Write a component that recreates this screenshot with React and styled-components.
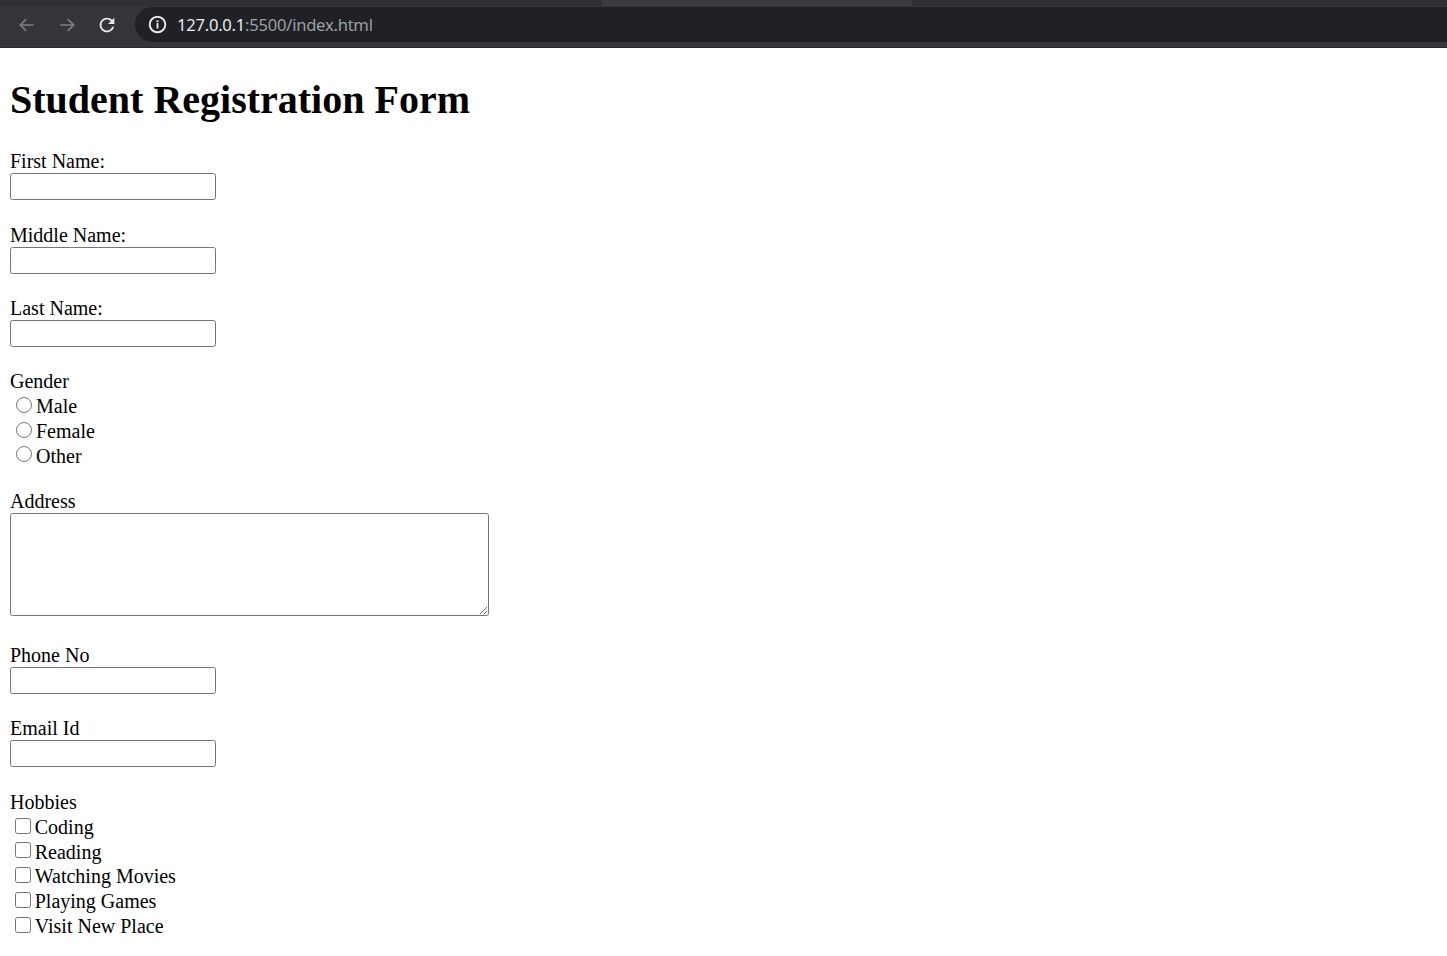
import React from "react";
import styled, { createGlobalStyle } from "styled-components";

const Global = createGlobalStyle`
  html, body { margin: 0; padding: 0; background: #fff; }
  body { font-family: "Liberation Serif", "Times New Roman", serif; color: #000; }
`;

const Chrome = styled.div`
  display: flex;
  flex-direction: column;
  height: 48px;
  background: #35363a;
  border-bottom: 1px solid #2a2b2e;
  box-sizing: border-box;
`;

const TabStrip = styled.div`
  height: 6px;
  background: #2b2c30;
  display: flex;
`;

const TabSeg = styled.div`
  width: ${(p) => p.$w}px;
  background: ${(p) => (p.$light ? "#3c3d41" : "#2f3034")};
`;

const Toolbar = styled.div`
  flex: 1;
  display: flex;
  align-items: center;
  padding: 0 0 4px 0;
`;

const NavBtn = styled.div`
  width: 40px;
  height: 36px;
  display: flex;
  align-items: center;
  justify-content: center;
  margin-left: ${(p) => p.$ml || 0}px;
  color: ${(p) => (p.$dim ? "#7c7d80" : "#e8eaed")};
`;

const Omnibox = styled.div`
  flex: 1;
  height: 35px;
  margin-left: 8px;
  background: #202124;
  border-radius: 18px 0 0 18px;
  display: flex;
  align-items: center;
  padding-left: 13px;
  font-family: "Noto Sans", "Open Sans", sans-serif;
  font-size: 16.6px;
  letter-spacing: -0.25px;
`;

const Host = styled.span`
  color: #e8eaed;
  margin-left: 10px;
`;

const Rest = styled.span`
  color: #9aa0a6;
`;

const Page = styled.main`
  padding: 0 10px 20px;
  display: flow-root;
`;

const Heading = styled.h1`
  font-size: 40px;
  font-weight: bold;
  margin: 28.3px 0 26.3px;
  line-height: normal;
`;

const Form = styled.form`
  display: flex;
  flex-direction: column;
  align-items: flex-start;
  font-size: 20px;
`;

const Field = styled.div`
  display: flex;
  flex-direction: column;
  align-items: flex-start;
  margin-bottom: ${(p) => p.$after || 23.5}px;
`;

const Label = styled.label`
  display: block;
  line-height: 23px;
  height: 23px;
`;

const TextInput = styled.input`
  box-sizing: border-box;
  width: 206px;
  height: 27px;
  margin: 0;
  padding: 1px 2px;
  border: 1px solid #767676;
  border-radius: 2.5px;
  font-size: 16px;
  background: #fff;
`;

const TextArea = styled.textarea`
  box-sizing: border-box;
  width: 479px;
  height: 103px;
  margin: 0;
  padding: 2px;
  border: 1px solid #767676;
  border-radius: 2.5px;
  background: #fff;
`;

const Option = styled.label`
  display: block;
  line-height: normal;
`;

const Radio = styled.input.attrs({ type: "radio" })`
  width: 16px;
  height: 16px;
  margin: 3.75px 3.75px 0 6.25px;
  vertical-align: baseline;
`;

const Check = styled.input.attrs({ type: "checkbox" })`
  width: 16px;
  height: 16px;
  margin: 3.75px 3.75px 3.75px 5px;
  vertical-align: baseline;
`;

const Back = () => (
  <svg width="20" height="20" viewBox="0 0 24 24" fill="none" stroke="currentColor" strokeWidth="2">
    <path d="M20 12H4.5M11 5l-7 7 7 7" />
  </svg>
);
const Fwd = () => (
  <svg width="20" height="20" viewBox="0 0 24 24" fill="none" stroke="currentColor" strokeWidth="2">
    <path d="M4 12h15.5M13 5l7 7-7 7" />
  </svg>
);
const Reload = () => (
  <svg width="22" height="22" viewBox="0 0 24 24" fill="currentColor">
    <path d="M17.65 6.35A7.958 7.958 0 0 0 12 4c-4.42 0-7.99 3.58-7.99 8s3.57 8 7.99 8c3.73 0 6.84-2.55 7.730-6h-2.08A5.99 5.99 0 0 1 12 18c-3.31 0-6-2.69-6-6s2.69-6 6-6c1.66 0 3.14.69 4.22 1.78L13 11h7V4l-2.35 2.35z" />
  </svg>
);
const Info = () => (
  <svg width="19" height="19" viewBox="0 0 20 20">
    <circle cx="10" cy="10" r="8.2" fill="none" stroke="#e8eaed" strokeWidth="2" />
    <rect x="9" y="8.6" width="2" height="5.6" fill="#e8eaed" />
    <rect x="9" y="5.6" width="2" height="2" fill="#e8eaed" />
  </svg>
);

export default function App() {
  return (
    <>
      <Global />
      <Chrome>
        <TabStrip>
          <TabSeg $w={602} />
          <TabSeg $w={310} $light />
          <TabSeg $w={535} />
        </TabStrip>
        <Toolbar>
          <NavBtn $dim $ml={7}><Back /></NavBtn>
          <NavBtn $dim><Fwd /></NavBtn>
          <NavBtn><Reload /></NavBtn>
          <Omnibox>
            <Info />
            <Host>127.0.0.1</Host>
            <Rest>:5500/index.html</Rest>
          </Omnibox>
        </Toolbar>
      </Chrome>
      <Page>
        <Heading>Student Registration Form</Heading>
        <Form>
          <Field $after={24.5}>
            <Label htmlFor="fn">First Name:</Label>
            <TextInput id="fn" type="text" />
          </Field>
          <Field $after={22.5}>
            <Label htmlFor="mn">Middle Name:</Label>
            <TextInput id="mn" type="text" />
          </Field>
          <Field>
            <Label htmlFor="ln">Last Name:</Label>
            <TextInput id="ln" type="text" />
          </Field>
          <Field $after={22.5}>
            <Label as="div">Gender</Label>
            <Option><Radio name="g" />Male</Option>
            <Option><Radio name="g" />Female</Option>
            <Option><Radio name="g" />Other</Option>
          </Field>
          <Field $after={28}>
            <Label htmlFor="ad">Address</Label>
            <TextArea id="ad" />
          </Field>
          <Field>
            <Label htmlFor="ph">Phone No</Label>
            <TextInput id="ph" type="text" />
          </Field>
          <Field>
            <Label htmlFor="em">Email Id</Label>
            <TextInput id="em" type="text" />
          </Field>
          <Field>
            <Label as="div">Hobbies</Label>
            <Option><Check />Coding</Option>
            <Option><Check />Reading</Option>
            <Option><Check />Watching Movies</Option>
            <Option><Check />Playing Games</Option>
            <Option><Check />Visit New Place</Option>
          </Field>
        </Form>
      </Page>
    </>
  );
}
